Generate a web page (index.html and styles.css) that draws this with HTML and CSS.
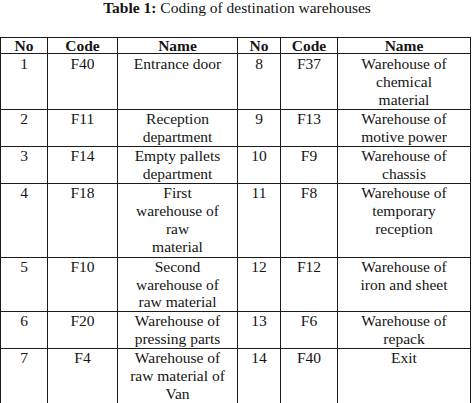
FILE: index.html
```html
<!DOCTYPE html>
<html>
<head>
<meta charset="utf-8">
<link rel="stylesheet" href="styles.css">
</head>
<body>
<div class="caption"><b>Table 1:</b> Coding of destination warehouses</div>
<table class="codes">
  <colgroup>
    <col class="c-no1"><col class="c-code1"><col class="c-name1">
    <col class="c-no2"><col class="c-code2"><col class="c-name2">
  </colgroup>
  <thead>
    <tr class="head">
      <th>No</th><th>Code</th><th>Name</th><th>No</th><th>Code</th><th>Name</th>
    </tr>
  </thead>
  <tbody>
    <tr class="r1">
      <td>1</td><td>F40</td><td>Entrance door</td>
      <td>8</td><td>F37</td><td>Warehouse of<br>chemical<br>material</td>
    </tr>
    <tr class="r2">
      <td>2</td><td>F11</td><td>Reception<br>department</td>
      <td>9</td><td>F13</td><td>Warehouse of<br>motive power</td>
    </tr>
    <tr class="r3">
      <td>3</td><td>F14</td><td>Empty pallets<br>department</td>
      <td>10</td><td>F9</td><td>Warehouse of<br>chassis</td>
    </tr>
    <tr class="r4">
      <td>4</td><td>F18</td><td>First<br>warehouse of<br>raw<br>material</td>
      <td>11</td><td>F8</td><td>Warehouse of<br>temporary<br>reception</td>
    </tr>
    <tr class="r5">
      <td>5</td><td>F10</td><td>Second<br>warehouse of<br>raw material</td>
      <td>12</td><td>F12</td><td>Warehouse of<br>iron and sheet</td>
    </tr>
    <tr class="r6">
      <td>6</td><td>F20</td><td>Warehouse of<br>pressing parts</td>
      <td>13</td><td>F6</td><td>Warehouse of<br>repack</td>
    </tr>
    <tr class="r7">
      <td>7</td><td>F4</td><td>Warehouse of<br>raw material of<br>Van</td>
      <td>14</td><td>F40</td><td>Exit</td>
    </tr>
  </tbody>
</table>
</body>
</html>
```

FILE: styles.css
```css
html, body {
  margin: 0;
  padding: 0;
  background: #ffffff;
}
body {
  width: 474px;
  height: 403px;
  overflow: hidden;
  font-family: "Liberation Serif", "Times New Roman", serif;
  font-size: 15.5px;
  color: #141414;
}
.caption {
  text-align: center;
  line-height: 15px;
  height: 15px;
}
.caption b {
  font-weight: bold;
}
.codes {
  margin-top: 22px;
  border-collapse: collapse;
  table-layout: fixed;
  width: 471px;
  font-family: "Liberation Serif", "Times New Roman", serif;
  font-size: 15.5px;
  color: #141414;
}
.c-no1 { width: 47px; }
.c-code1 { width: 70px; }
.c-name1 { width: 120px; }
.c-no2 { width: 43px; }
.c-code2 { width: 57px; }
.c-name2 { width: 133px; }
.codes th, .codes td {
  border: 1px solid #1a1a1a;
  text-align: center;
  vertical-align: top;
  padding: 0;
  line-height: 18px;
  font-family: "Liberation Serif", "Times New Roman", serif;
  font-size: 15.5px;
}
.codes th {
  font-weight: bold;
  line-height: 15px;
}
.head { height: 16px; }
.r1 { height: 55px; }
.r2 { height: 37px; }
.r3 { height: 37px; }
.r4 { height: 74px; }
.r5 { height: 54px; }
.r5 td { line-height: 17.6px; }
.r6 { height: 37px; }
.r7 { height: 70px; }
.r1 td { padding-top: 1px; }
```
